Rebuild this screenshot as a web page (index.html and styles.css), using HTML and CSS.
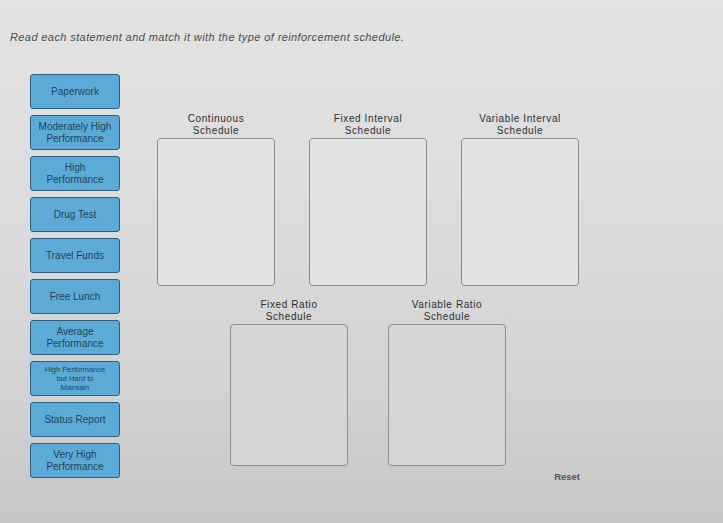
FILE: index.html
```html
<!DOCTYPE html>
<html>
<head>
<meta charset="utf-8">
<link rel="stylesheet" href="styles.css">
</head>
<body>
<div class="page">
  <p class="prompt">Read each statement and match it with the type of reinforcement schedule.</p>
  <div class="main">
    <div class="choices">
      <div class="chip">Paperwork</div>
      <div class="chip">Moderately High Performance</div>
      <div class="chip">High<br>Performance</div>
      <div class="chip">Drug Test</div>
      <div class="chip">Travel Funds</div>
      <div class="chip">Free Lunch</div>
      <div class="chip">Average<br>Performance</div>
      <div class="chip small">High Performance<br>but Hard to<br>Maintain</div>
      <div class="chip">Status Report</div>
      <div class="chip">Very High<br>Performance</div>
    </div>
    <div class="targets">
      <div class="row top">
        <div class="zone"><div class="label">Continuous<br>Schedule</div><div class="box"></div></div>
        <div class="zone"><div class="label">Fixed Interval<br>Schedule</div><div class="box"></div></div>
        <div class="zone"><div class="label">Variable Interval<br>Schedule</div><div class="box"></div></div>
      </div>
      <div class="row bottom">
        <div class="zone"><div class="label">Fixed Ratio<br>Schedule</div><div class="box short"></div></div>
        <div class="zone"><div class="label">Variable Ratio<br>Schedule</div><div class="box short"></div></div>
      </div>
      <div class="reset-row"><span class="reset">Reset</span></div>
    </div>
  </div>
</div>
</body>
</html>
```
FILE: styles.css
```css
html, body {
  margin: 0;
  padding: 0;
}
body {
  width: 723px;
  height: 523px;
  overflow: hidden;
  background: linear-gradient(to bottom, #e3e3e3 0%, #dcdcdc 40%, #d2d2d2 75%, #c6c6c6 100%);
  font-family: "Liberation Sans", Arial, sans-serif;
}
.page {
  padding: 31px 0 0 10px;
}
.prompt {
  margin: 0;
  font-style: italic;
  font-size: 11px;
  line-height: 13px;
  letter-spacing: 0.4px;
  color: #4a4a4a;
}
.main {
  display: flex;
  margin-top: 30px;
}
.choices {
  display: flex;
  flex-direction: column;
  gap: 6px;
  margin-left: 20px;
  width: 90px;
}
.chip {
  box-sizing: border-box;
  height: 35px;
  display: flex;
  align-items: center;
  justify-content: center;
  text-align: center;
  background: #5babd6;
  border: 1px solid #2f5f80;
  border-radius: 3px;
  color: #22435c;
  font-size: 10px;
  line-height: 12px;
  padding: 0 2px;
}
.chip.small {
  font-size: 7.5px;
  line-height: 9px;
}
.targets {
  margin-left: 30px;
  width: 436px;
  padding-top: 39px;
}
.row {
  display: flex;
  justify-content: center;
}
.row.top { gap: 34px; }
.row.bottom { gap: 40px; margin-top: 13px; }
.zone {
  display: flex;
  flex-direction: column;
  align-items: center;
  width: 118px;
}
.label {
  text-align: center;
  font-size: 10px;
  line-height: 12px;
  color: #2e2e2e;
  letter-spacing: 0.6px;
  margin-bottom: 1px;
  height: 24px;
}
.box {
  box-sizing: border-box;
  width: 118px;
  height: 148px;
  border: 1px solid #8c8c8c;
  border-radius: 4px;
  background: #e2e2e2;
}
.box.short {
  height: 142px;
  background: #d6d6d6;
}
.reset-row {
  display: flex;
  justify-content: flex-end;
  padding-right: 6px;
  margin-top: 5px;
}
.reset {
  font-size: 9.5px;
  font-weight: bold;
  color: #555;
}
```
